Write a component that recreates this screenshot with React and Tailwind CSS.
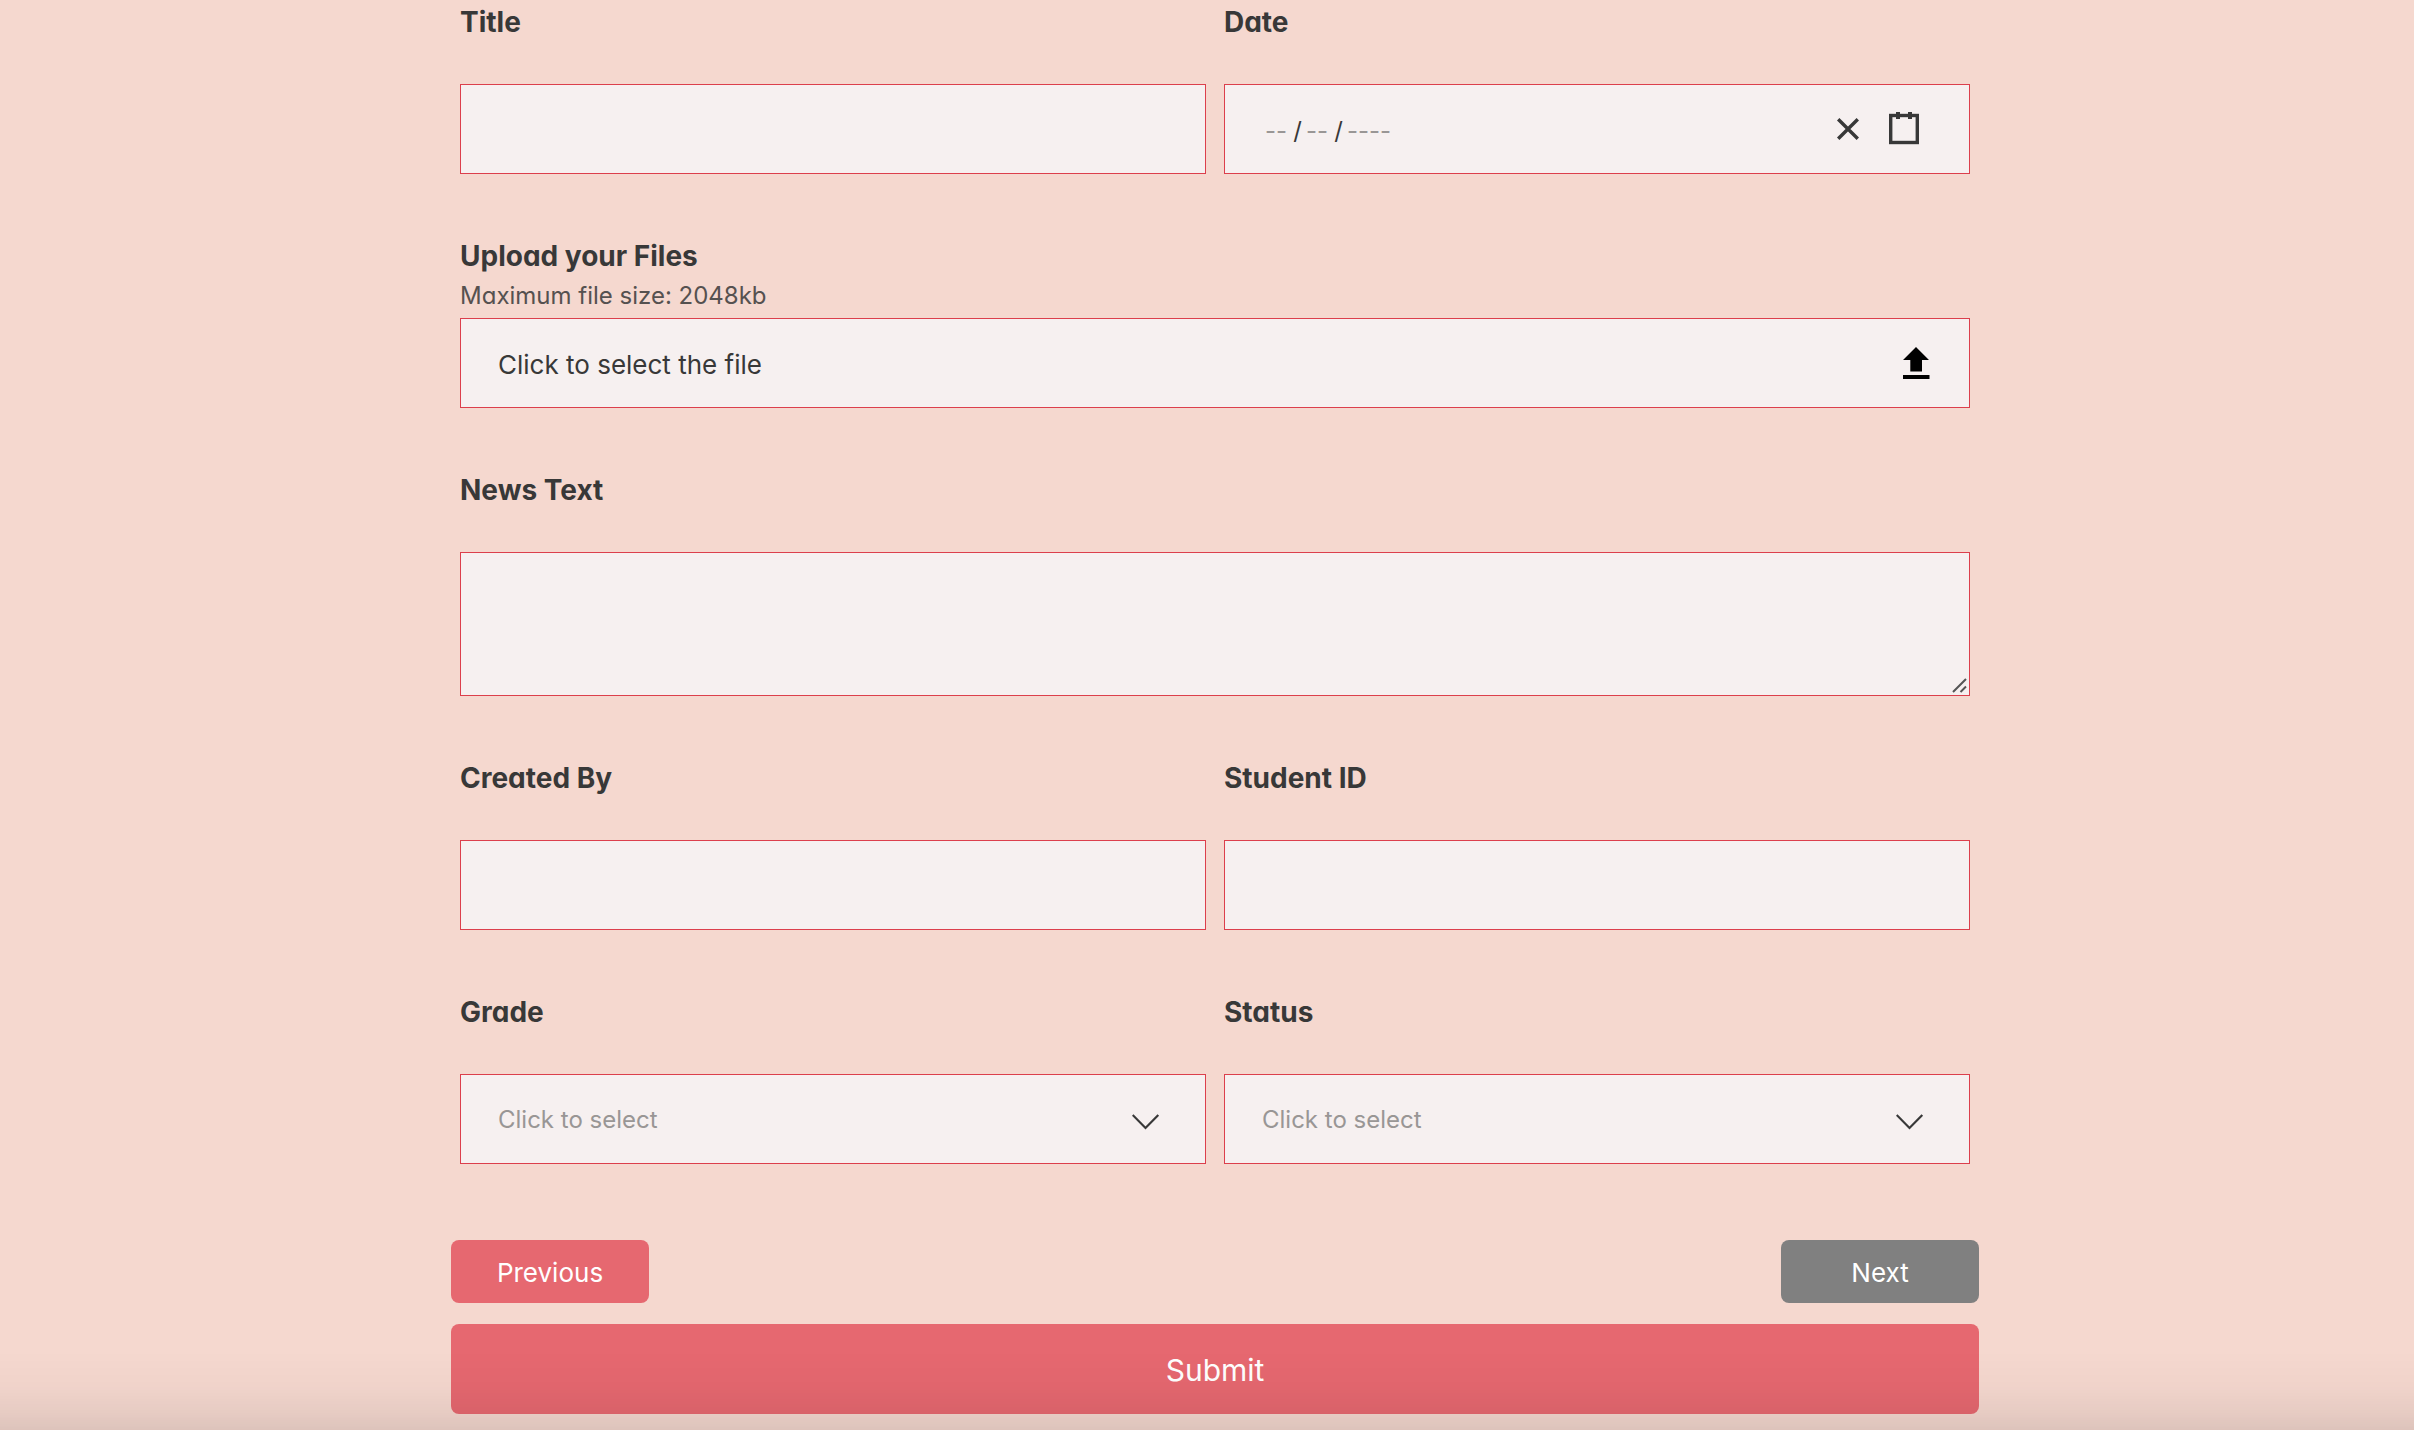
import React, { useState } from 'react'

const boxStyle = 'w-full h-[90px] border border-[#dc3f4c] bg-[#f6f0f0] text-[#383838] outline-none focus:border-2'

const Field = ({ id, label, hint, wide, children }) => (
    <div className={wide ? 'col-span-2' : ''}>
        <label htmlFor={id} className='block text-[28px] leading-9 font-bold text-[#383838]'>{label}</label>
        <div className='flex h-11 items-center text-[24px] leading-9 text-[#555150]'>{hint}</div>
        {children}
    </div>
)

const TextField = ({ id, label }) => (
    <Field id={id} label={label}>
        <input id={id} name={id} type='text' className={`${boxStyle} block px-[37px] text-[26px]`} />
    </Field>
)

const SelectField = ({ id, label, options }) => {
    const [value, setValue] = useState('')

    return (
        <Field id={id} label={label}>
            <div className='relative'>
                <select
                    id={id}
                    name={id}
                    value={value}
                    onChange={(e) => setValue(e.target.value)}
                    className={`${boxStyle} block appearance-none px-[37px] pt-0.5 text-[24px] ${value === '' ? 'text-[#999695]' : ''}`}
                >
                    <option value=''>Click to select</option>
                    {options.map((option) => (
                        <option key={option} value={option}>{option}</option>
                    ))}
                </select>
                <div className='pointer-events-none absolute inset-y-0 right-[46px] flex items-center pt-1.5'>
                    <svg width='28' height='18' viewBox='0 0 28 18' fill='none' stroke='#383838' strokeWidth='2.2'>
                        <path d='M0.7 2 L13.5 15 L26.3 2' />
                    </svg>
                </div>
            </div>
        </Field>
    )
}

const emptyDate = { day: '', month: '', year: '' }

const DateField = () => {
    const [date, setDate] = useState(emptyDate)
    const updateDate = (e) => setDate({ ...date, [e.target.name]: e.target.value })
    const part = 'bg-transparent p-0 outline-none placeholder:text-[#999695] placeholder:opacity-100'

    return (
        <Field id='day' label='Date'>
            <div className={`${boxStyle} flex items-center justify-between pl-10 pr-[49px]`}>
                <div className='flex items-center pt-1 text-[24px]'>
                    <input id='day' name='day' aria-label='Day' placeholder='--' maxLength={2} value={date.day} onChange={updateDate} className={`${part} w-6`} />
                    <span className='w-[17px] text-center'>/</span>
                    <input name='month' aria-label='Month' placeholder='--' maxLength={2} value={date.month} onChange={updateDate} className={`${part} w-6`} />
                    <span className='w-[17px] text-center'>/</span>
                    <input name='year' aria-label='Year' placeholder='----' maxLength={4} value={date.year} onChange={updateDate} className={`${part} w-16`} />
                </div>
                <div className='flex items-center gap-7'>
                    <button type='button' aria-label='Clear date' onClick={() => setDate(emptyDate)}>
                        <svg width='24' height='24' viewBox='0 0 24 24' fill='none' stroke='#383838' strokeWidth='3.4'>
                            <path d='M2.2 2.2 L21.8 21.8 M21.8 2.2 L2.2 21.8' />
                        </svg>
                    </button>
                    <button type='button' aria-label='Open calendar'>
                        <svg width='32' height='34' viewBox='0 0 32 34' fill='none' stroke='#383838'>
                            <rect x='2.7' y='3.5' width='26.6' height='27' strokeWidth='3.4' />
                            <path d='M10 0 V7 M22 0 V7' strokeWidth='4' />
                        </svg>
                    </button>
                </div>
            </div>
        </Field>
    )
}

const UploadField = () => {
    const [fileName, setFileName] = useState('')

    return (
        <Field id='files' label='Upload your Files' hint='Maximum file size: 2048kb' wide>
            <label htmlFor='files' className={`${boxStyle} relative flex cursor-pointer items-center justify-between pl-[37px] pr-[39px] text-[26px]`}>
                <span className='pt-0.5'>{fileName || 'Click to select the file'}</span>
                <input
                    id='files'
                    type='file'
                    className='sr-only'
                    onChange={(e) => setFileName(e.target.files[0] ? e.target.files[0].name : '')}
                />
                <svg width='28' height='34' viewBox='0 0 28 34' fill='#000'>
                    <path d='M14 1 L27 14 H20 V25.5 H8.3 V14 H1 Z' />
                    <rect x='1' y='29' width='26.5' height='4' />
                </svg>
            </label>
        </Field>
    )
}

const App = () => {
    return (
        <main className="min-h-screen bg-[#f5d8cf] pt-1 pr-0 pb-4 pl-4 font-['Inter','Open_Sans',sans-serif] [font-feature-settings:'cv11']">
            <form className='mx-auto max-w-[1528px]' onSubmit={(e) => e.preventDefault()}>
                <div className='grid grid-cols-2 gap-x-[18px] gap-y-16 px-[9px]'>
                    <TextField id='title' label='Title' />
                    <DateField />
                    <UploadField />
                    <Field id='news' label='News Text' wide>
                        <div className='relative'>
                            <textarea
                                id='news'
                                name='news'
                                className='block h-36 w-full resize-y border border-[#dc3f4c] bg-[#f6f0f0] px-[37px] py-6 text-[26px] text-[#383838] outline-none [&::-webkit-resizer]:hidden'
                            />
                            <svg className='pointer-events-none absolute right-[3px] bottom-[3px]' width='15' height='15' viewBox='0 0 15 15' fill='none' stroke='#555' strokeWidth='2'>
                                <path d='M1 14 L14 1 M8.5 14 L14 8.5' />
                            </svg>
                        </div>
                    </Field>
                    <TextField id='createdBy' label='Created By' />
                    <TextField id='studentId' label='Student ID' />
                    <SelectField id='grade' label='Grade' options={['9', '10', '11', '12']} />
                    <SelectField id='status' label='Status' options={['Draft', 'Published']} />
                </div>
                <div className='mt-[76px] flex justify-between text-[26px] text-white'>
                    <button type='button' className='h-[63px] w-[198px] rounded-lg bg-[#e66870] pt-0.5'>Previous</button>
                    <button type='button' className='h-[63px] w-[198px] rounded-lg bg-[#808080] pt-0.5'>Next</button>
                </div>
                <button type='submit' className='mt-[21px] block h-[90px] w-full rounded-lg bg-[#e66870] pt-0.5 text-[30px] text-white'>Submit</button>
            </form>
            {/* soft shade along the bottom of the window */}
            <div className='pointer-events-none fixed inset-x-0 bottom-0 h-20 bg-[linear-gradient(to_bottom,rgba(0,0,0,0)_0%,rgba(0,0,0,0.02)_45%,rgba(0,0,0,0.06)_80%,rgba(0,0,0,0.095)_100%)]'></div>
        </main>
    )
}

export default App
